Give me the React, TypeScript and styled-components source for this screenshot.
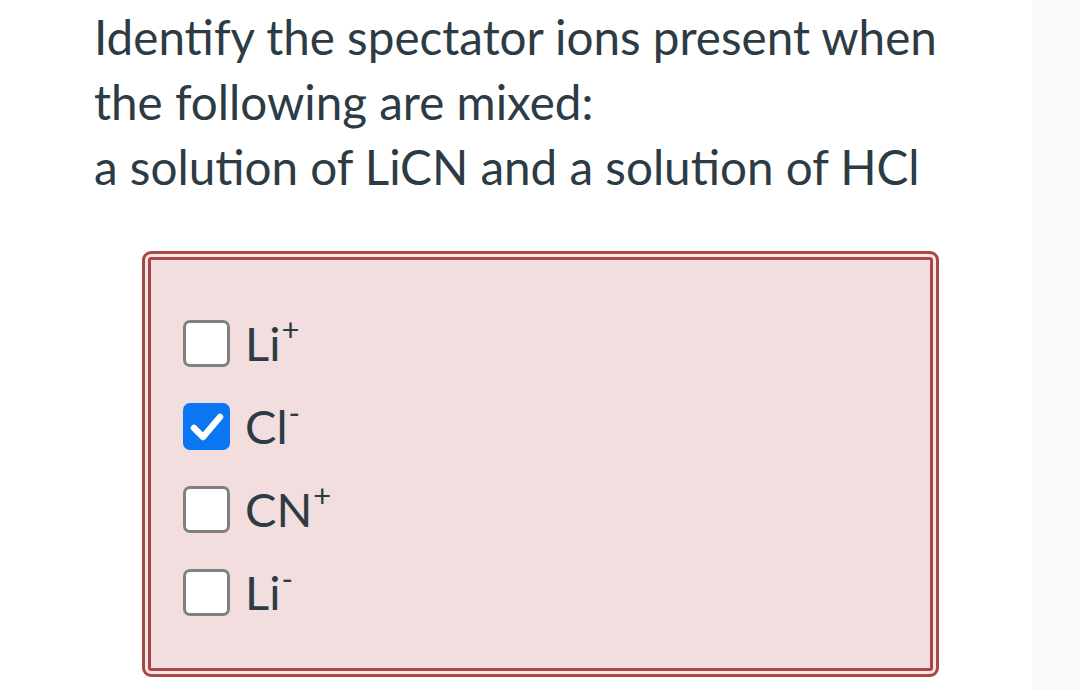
import React, { useState } from "react";
import styled, { createGlobalStyle } from "styled-components";

const GlobalStyle = createGlobalStyle`
  html, body {
    margin: 0;
    padding: 0;
    background: #ffffff;
  }
  body {
    font-family: Lato, "Liberation Sans", sans-serif;
    color: #2d3b45;
  }
`;

const Page = styled.div`
  display: flex;
  width: 1080px;
  height: 690px;
  overflow: hidden;
`;

const Main = styled.div`
  width: 1032px;
  padding: 4px 0 0 94px;
  box-sizing: border-box;
`;

const Side = styled.div`
  flex: 1;
  background: #f9f9f9;
`;

const Question = styled.div`
  font-size: 47.6px;
  line-height: 65px;
  margin: 0;
`;

const AnswerBox = styled.div`
  margin: 52px 0 0 48px;
  width: 797px;
  height: 426px;
  box-sizing: border-box;
  border: 3px solid #a94646;
  border-radius: 9px;
  padding: 3px;
  background: #fae6e6;
`;

const AnswerInner = styled.div`
  height: 100%;
  box-sizing: border-box;
  border: 3px solid #a94646;
  border-radius: 3px;
  background: #f2dede;
  padding: 42px 0 0 32px;
`;

const Option = styled.label`
  display: flex;
  align-items: center;
  height: 83px;
  gap: 15px;
  cursor: pointer;
`;

const Box = styled.span<{ $checked: boolean }>`
  width: 47px;
  height: 47px;
  flex-shrink: 0;
  box-sizing: border-box;
  border-radius: 7px;
  border: ${(p) => (p.$checked ? "none" : "3px solid #808080")};
  background: ${(p) => (p.$checked ? "#0b76f2" : "#ffffff")};
  display: flex;
  align-items: center;
  justify-content: center;
`;

const Label = styled.span`
  font-size: 47px;
  line-height: 1;
  sup {
    font-size: 31px;
    line-height: 0;
    vertical-align: 0;
    position: relative;
    top: -20px;
    margin-left: 1px;
  }
`;

const options = [
  { base: "Li", charge: "+" },
  { base: "Cl", charge: "-" },
  { base: "CN", charge: "+" },
  { base: "Li", charge: "-" },
];

const App = () => {
  const [checked, setChecked] = useState<number[]>([1]);

  const toggle = (i: number) => {
    setChecked((prev) =>
      prev.includes(i) ? prev.filter((x) => x !== i) : [...prev, i]
    );
  };

  return (
    <Page>
      <GlobalStyle />
      <Main>
        <Question>
          Identify the spectator ions present when
          <br />
          the following are mixed:
          <br />a solution of LiCN and a solution of HCl
        </Question>
        <AnswerBox>
          <AnswerInner>
            {options.map((o, i) => (
              <Option key={i} onClick={() => toggle(i)}>
                <Box $checked={checked.includes(i)}>
                  {checked.includes(i) && (
                    <svg width="34" height="30" viewBox="0 0 34 30">
                      <path
                        d="M4 16 L13 25 L30 5"
                        fill="none"
                        stroke="#fff"
                        strokeWidth="6.5"
                        strokeLinecap="round"
                        strokeLinejoin="round"
                      />
                    </svg>
                  )}
                </Box>
                <Label>
                  {o.base}
                  <sup>{o.charge}</sup>
                </Label>
              </Option>
            ))}
          </AnswerInner>
        </AnswerBox>
      </Main>
      <Side />
    </Page>
  );
};

export default App;
